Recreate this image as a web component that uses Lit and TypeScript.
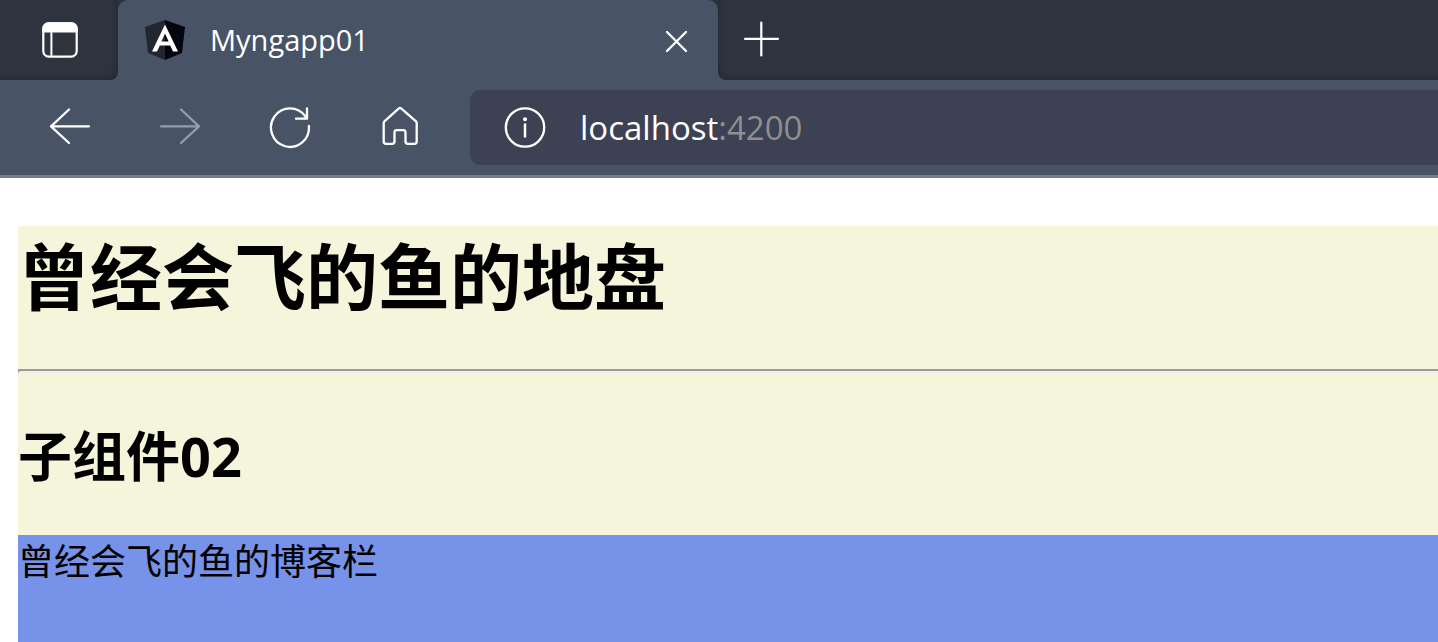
import { LitElement, html, css } from "lit";
import { customElement, property } from "lit/decorators.js";

@customElement("browser-tabs")
class BrowserTabs extends LitElement {
  @property() title = "";

  static styles = css`
    :host {
      display: flex;
      height: 80px;
      background: #495366;
    }
    button {
      display: flex;
      align-items: center;
      justify-content: center;
      margin: 0;
      padding: 0;
      border: 0;
      background: none;
      color: #fff;
    }
    svg {
      display: block;
      flex: none;
    }
    .lead {
      flex: none;
      display: flex;
      background: #2d333f;
      border-bottom-right-radius: 8px;
      box-shadow: inset -4px -4px 6px -3px #0003;
    }
    .lead button {
      width: 118px;
    }
    .slot {
      flex: 0 1 600px;
      min-width: 0;
      display: flex;
      background: #2d333f;
      border-radius: 0 0 8px 8px;
    }
    .tab {
      flex: 1;
      min-width: 0;
      display: flex;
      align-items: center;
      gap: 25px;
      padding: 0 22px 0 27px;
      border-radius: 10px 10px 0 0;
      background: #495366;
      color: #fff;
    }
    .title {
      flex: 1;
      min-width: 0;
      overflow: hidden;
      white-space: nowrap;
      font-size: 29px;
      line-height: 40px;
    }
    .rest {
      flex: 1;
      display: flex;
      background: #2d333f;
      border-bottom-left-radius: 8px;
      box-shadow: inset 4px -4px 6px -3px #0003;
    }
    .rest button {
      width: 86px;
    }
  `;

  render() {
    return html`
      <div class="lead">
        <button aria-label="Tab actions">
          <svg width="40" height="40" viewBox="0 0 40 40" fill="none" stroke="currentColor">
            <rect x="4.3" y="3.3" width="33.4" height="33.4" rx="5.5" stroke-width="2.2" />
            <path d="M3.3 12.4V8.2a6 6 0 0 1 6-6h23.400a6 6 0 0 1 6 6v4.200z" fill="currentColor" stroke="none" />
            <path d="M12.400 12v25" stroke-width="2" />
          </svg>
        </button>
      </div>
      <div class="slot">
        <div class="tab">
          <svg width="40" height="40" viewBox="0 0 40 40">
            <path d="M20 0 0 7l3 26 17 7z" fill="#23262f" />
            <path d="M20 0 40 7l-3 26-17 7z" fill="#03060f" />
            <path
              fill="#fff"
              fill-rule="evenodd"
              d="M20 4.500 7 31.500h5l2.800-6h10.400l2.800 6h5zM20 13.500l3.600 8h-7.200z"
            />
          </svg>
          <span class="title">${this.title}</span>
          <button aria-label="Close tab">
            <svg width="40" height="40" viewBox="0 0 40 40" stroke="currentColor" stroke-width="2.3" stroke-linecap="round">
              <path d="M11 31 30 12M11 12l19 19" />
            </svg>
          </button>
        </div>
      </div>
      <div class="rest">
        <button aria-label="New tab">
          <svg width="40" height="40" viewBox="0 0 40 40" stroke="currentColor" stroke-width="2.2" stroke-linecap="round">
            <path d="M20.300 2.500v33M4 18.800h33" />
          </svg>
        </button>
      </div>
    `;
  }
}

@customElement("browser-toolbar")
class BrowserToolbar extends LitElement {
  @property() host = "";
  @property() port = "";

  static styles = css`
    :host {
      display: flex;
      padding: 10px 0 10px 15px;
      background: #495366;
      border-bottom: 3px solid #737c8b;
    }
    button {
      flex: none;
      display: flex;
      align-items: center;
      justify-content: center;
      width: 110px;
      margin: 0;
      padding: 0;
      border: 0;
      background: none;
      color: #fff;
    }
    button:disabled {
      color: #969da8;
    }
    svg {
      display: block;
      flex: none;
      fill: none;
      stroke: currentColor;
      stroke-width: 2.3;
      stroke-linecap: round;
      stroke-linejoin: round;
    }
    .address {
      flex: 1;
      min-width: 0;
      display: flex;
      align-items: center;
      height: 75px;
      margin-left: 15px;
      padding-left: 33px;
      border-radius: 10px 0 0 10px;
      background: #3c4153;
      color: #fff;
      font-size: 33px;
      line-height: 48px;
    }
    label {
      flex: none;
      margin-right: 33px;
    }
    input {
      field-sizing: content;
      height: 48px;
      margin: 0;
      padding: 0;
      border: 0;
      outline: 0;
      background: none;
      color: inherit;
      font: inherit;
    }
    .port {
      color: #8f8f8f;
    }
  `;

  render() {
    return html`
      <button aria-label="Back">
        <svg width="44" height="45" viewBox="0 0 44 45"><path d="M41 21.300H3M21 4.500 3 21.300 21 38" /></svg>
      </button>
      <button aria-label="Forward" disabled>
        <svg width="44" height="45" viewBox="0 0 44 45"><path d="M3 21.300H41M23 4.500l18 16.800L23 38" /></svg>
      </button>
      <button aria-label="Refresh">
        <svg width="44" height="45" viewBox="0 0 44 45">
          <path d="M40.900 21A19 19.300 0 1 1 37.500 11.500M39 3.500V13.700H28" />
        </svg>
      </button>
      <button aria-label="Home">
        <svg width="44" height="45" viewBox="0 0 44 45">
          <path
            d="M20.600 3.700a2 2 0 0 1 2.800 0L38 16.400a2 2 0 0 1 .7 1.500V36.500a2.300 2.300 0 0 1-2.300 2.300h-6.600a2.300 2.300 0 0 1-2.300-2.300V27.500a2.300 2.300 0 0 0-2.300-2.300h-6.400a2.300 2.300 0 0 0-2.300 2.300v9a2.300 2.300 0 0 1-2.300 2.300H8a2.300 2.300 0 0 1-2.300-2.300V17.900a2 2 0 0 1 .7-1.500z"
          />
        </svg>
      </button>
      <div class="address">
        <label for="url" aria-label="Address">
          <svg width="44" height="45" viewBox="0 0 44 45">
            <circle cx="22" cy="22.500" r="19.200" />
            <path d="M22 19.500V31.500" stroke-width="2.500" />
            <circle cx="22" cy="14.300" r="2" fill="currentColor" stroke="none" />
          </svg>
        </label>
        <input id="url" type="text" spellcheck="false" .value=${this.host} /><span class="port">:${this.port}</span>
      </div>
    `;
  }
}

@customElement("app-root")
class AppRoot extends LitElement {
  static styles = css`
    :host {
      display: flex;
      flex-direction: column;
      min-height: 100vh;
      overflow: hidden;
      background: #fff;
      font-family: "Open Sans", "Noto Sans CJK SC", sans-serif;
    }
    main {
      flex: 1;
      display: flex;
      flex-direction: column;
      padding: 48px 0 0 18px;
      color: #000;
    }
    .parent {
      padding-bottom: 43px;
      background: #f5f5dc;
    }
    h1 {
      margin: 0 0 43px;
      font-size: 72px;
      line-height: 100px;
    }
    hr {
      margin: 0 0 47px;
      border: 2px solid;
      border-color: #9a9a9a #eee #eee #9a9a9a;
      border-right: 0;
    }
    h2 {
      margin: 0;
      font-size: 54px;
      line-height: 72px;
    }
    .child {
      flex: 1;
      background: #7792e9;
    }
    p {
      margin: 0;
      font-size: 36px;
      line-height: 54px;
    }
  `;

  render() {
    return html`
      <browser-tabs title="Myngapp01"></browser-tabs>
      <browser-toolbar host="localhost" port="4200"></browser-toolbar>
      <main>
        <section class="parent">
          <h1>曾经会飞的鱼的地盘</h1>
          <hr />
          <h2>子组件02</h2>
        </section>
        <section class="child">
          <p>曾经会飞的鱼的博客栏</p>
        </section>
      </main>
    `;
  }
}
